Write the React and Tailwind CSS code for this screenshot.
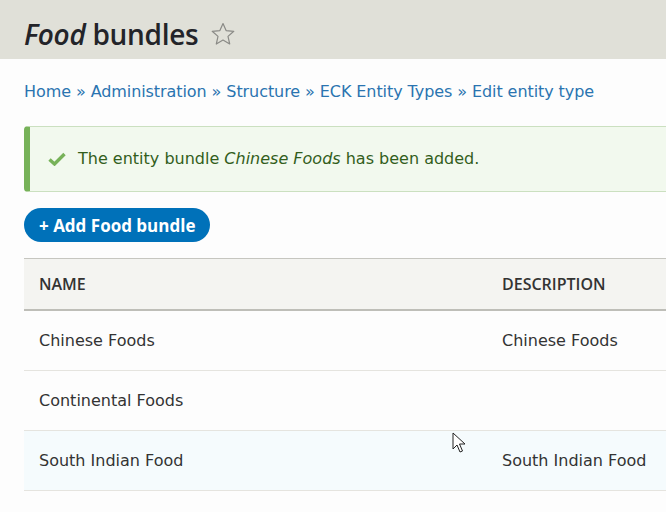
import React from "react";

const font = { fontFamily: '"DejaVu Sans", "Lucida Grande", sans-serif' };
const openSans = { fontFamily: '"Open Sans", "Segoe UI", sans-serif' };

function Star() {
  return (
    <svg width="26" height="24" viewBox="0 0 26 24" className="ml-[12px]">
      <path
        d="M13 1.5 L16.1 8.6 L23.8 9.3 L18 14.4 L19.7 22 L13 18 L6.3 22 L8 14.4 L2.2 9.3 L9.9 8.6 Z"
        fill="none"
        stroke="#8a8a86"
        strokeWidth="1.2"
        strokeLinejoin="round"
      />
    </svg>
  );
}

function Check() {
  return (
    <svg width="18" height="14" viewBox="0 0 18 14">
      <path d="M1.5 7.5 L6.5 12 L16.5 2" fill="none" stroke="#77b259" strokeWidth="3.4" />
    </svg>
  );
}

function Cursor() {
  return (
    <svg width="14" height="22" viewBox="0 0 14 22" className="absolute left-[452px] top-[432px]">
      <path
        d="M1 1 L1 17 L5 13 L8 20 L10.5 19 L7.5 12 L13 12 Z"
        fill="#fff"
        stroke="#222"
        strokeWidth="1"
        strokeLinejoin="round"
      />
    </svg>
  );
}

export default function App() {
  const rows = [
    { name: "Chinese Foods", desc: "Chinese Foods", hl: false },
    { name: "Continental Foods", desc: "", hl: false },
    { name: "South Indian Food", desc: "South Indian Food", hl: true },
  ];
  return (
    <div className="relative w-[666px] h-[512px] overflow-hidden bg-[#fdfdfd]" style={font}>
      <div className="h-[59px] bg-[#e0e0d8] flex items-center pl-6 pt-[8px]">
        <h1 className="text-[28px] font-semibold text-[#232429] leading-none tracking-[-0.3px]" style={openSans}>
          <em className="font-semibold">Food</em> bundles
        </h1>
        <Star />
      </div>

      <div className="pl-6">
        <nav className="mt-[23px] text-[16px] text-[#2a74b0] leading-5 whitespace-nowrap tracking-[-0.08px]">
          Home » Administration » Structure » ECK Entity Types » Edit entity type
        </nav>

        <div className="mt-[24px] w-[720px] h-[66px] flex items-center bg-[#f2f9ee] border border-[#cbe0c0] border-l-[6px] border-l-[#77b259] rounded-l-sm pl-[18px] text-[16px] text-[#325e1c]">
          <Check />
          <span className="ml-3">
            The entity bundle <em>Chinese Foods</em> has been added.
          </span>
        </div>

        <button
          className="mt-4 h-[34px] px-[15px] rounded-full bg-[#0071b9] text-white text-[17px] font-bold leading-none"
          style={openSans}
        >
          + Add Food bundle
        </button>

        <div className="mt-[16px] w-[720px]">
          <div
            className="flex h-[53px] items-center bg-[#f4f4f1] border-t border-[#c6c6c0] border-b-2 border-b-[#bebeb8] text-[16px] font-semibold text-[#333] uppercase"
            style={openSans}
          >
            <div className="w-[478px] pl-[15px]">Name</div>
            <div>Description</div>
          </div>
          {rows.map((r) => (
            <div
              key={r.name}
              className={`flex h-[60px] items-center border-b border-[#e5e4df] text-[16px] text-[#333] ${r.hl ? "bg-[#f5fbfd]" : ""}`}
            >
              <div className="w-[478px] pl-[15px]">{r.name}</div>
              <div>{r.desc}</div>
            </div>
          ))}
        </div>
      </div>
      <Cursor />
    </div>
  );
}
